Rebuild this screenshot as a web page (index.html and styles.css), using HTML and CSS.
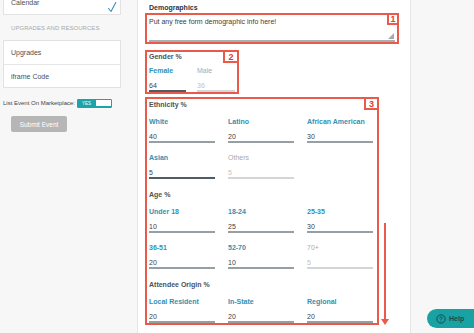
FILE: index.html
```html
<!DOCTYPE html>
<html>
<head>
<meta charset="utf-8">
<link rel="stylesheet" href="styles.css">
</head>
<body>
<div class="page">
  <aside class="sidebar">
    <div class="card first">
      <div class="card-row">Calendar
        <svg class="check" viewBox="0 0 10 12" width="10" height="12"><path d="M1.5 7.5 L4 10.5 L8.8 1.5" fill="none" stroke="#3a8fba" stroke-width="1.1" stroke-linecap="round" stroke-linejoin="round"/></svg>
      </div>
    </div>
    <div class="side-heading">UPGRADES AND RESOURCES</div>
    <div class="card">
      <div class="card-row">Upgrades</div>
      <div class="card-row divided">iframe Code</div>
    </div>
    <div class="market">
      <span>List Event On Marketplace:</span>
      <span class="toggle"><span class="toggle-on">YES</span><span class="toggle-off"></span></span>
    </div>
    <button class="submit">Submit Event</button>
  </aside>

  <main class="main">
    <div class="title">Demographics</div>

    <section class="box box1">
      <span class="badge b1">1</span>
      <div class="textarea">Put any free form demographic info here!<span class="grip"></span></div>
    </section>

    <section class="box box2">
      <span class="badge b2">2</span>
      <div class="heading">Gender %</div>
      <div class="grid grid2">
        <div class="field"><div class="label">Female</div><div class="value dark">64</div></div>
        <div class="field off"><div class="label">Male</div><div class="value">36</div></div>
      </div>
    </section>

    <section class="box box3">
      <span class="badge b3">3</span>
      <div class="heading">Ethnicity %</div>
      <div class="grid grid3">
        <div class="field"><div class="label">White</div><div class="value">40</div></div>
        <div class="field"><div class="label">Latino</div><div class="value">20</div></div>
        <div class="field"><div class="label">African American</div><div class="value">30</div></div>
        <div class="field"><div class="label">Asian</div><div class="value dark">5</div></div>
        <div class="field off"><div class="label">Others</div><div class="value">5</div></div>
      </div>

      <div class="heading section">Age %</div>
      <div class="grid grid3">
        <div class="field"><div class="label">Under 18</div><div class="value">10</div></div>
        <div class="field"><div class="label">18-24</div><div class="value">25</div></div>
        <div class="field"><div class="label">25-35</div><div class="value">30</div></div>
        <div class="field"><div class="label">36-51</div><div class="value">20</div></div>
        <div class="field"><div class="label">52-70</div><div class="value">10</div></div>
        <div class="field off"><div class="label">70+</div><div class="value">5</div></div>
      </div>

      <div class="heading section">Attendee Origin %</div>
      <div class="grid grid3">
        <div class="field"><div class="label">Local Resident</div><div class="value">20</div></div>
        <div class="field"><div class="label">In-State</div><div class="value">20</div></div>
        <div class="field"><div class="label">Regional</div><div class="value">20</div></div>
      </div>
    </section>

    <div class="arrow"></div>
  </main>

  <div class="rest">
    <button class="help">
      <svg class="help-icon" viewBox="0 0 12 12" width="10" height="10">
        <circle cx="6" cy="6" r="5" fill="none" stroke="#1d4b4d" stroke-width="1.2"/>
        <path d="M4.6 4.7 C4.6 3.9 5.2 3.5 6 3.5 C6.8 3.5 7.4 4 7.4 4.7 C7.4 5.5 6.3 5.6 6.1 6.5" fill="none" stroke="#1d4b4d" stroke-width="1.1" stroke-linecap="round"/>
        <circle cx="6.05" cy="8.3" r="0.65" fill="#1d4b4d"/>
      </svg>
      <span>Help</span>
    </button>
  </div>
</div>
</body>
</html>
```

FILE: styles.css
```css
* { box-sizing: border-box; }

html, body {
  margin: 0;
  padding: 0;
  width: 474px;
  height: 333px;
  overflow: hidden;
  background: #f7f7f7;
  font-family: "Liberation Sans", Arial, sans-serif;
  color: #3d4247;
}

.page {
  display: flex;
  height: 333px;
}

/* ---------- sidebar ---------- */
.sidebar {
  width: 137px;
  flex-shrink: 0;
  padding-left: 3px;
}

.card {
  width: 118px;
  background: #fff;
  border: 1px solid #e2e2e2;
}

.card.first { margin-top: -10px; }

.card-row {
  height: 23px;
  display: flex;
  align-items: center;
  padding-left: 7px;
  font-size: 7px;
  color: #4a4f54;
}

.card-row.divided { border-top: 1px solid #e6e6e6; }

.check {
  display: block;
  margin-left: auto;
  margin-right: 3px;
  position: relative;
  top: 4px;
}

.side-heading {
  margin: 9px 0 8px 8px;
  font-size: 6px;
  line-height: 8px;
  color: #a9a9a9;
  letter-spacing: 0.05px;
}

.market {
  margin-top: 10px;
  height: 10px;
  display: flex;
  align-items: center;
  font-size: 6px;
  color: #3f4449;
}

.toggle {
  margin-left: 2px;
  width: 35px;
  height: 9px;
  border: 1px solid #1da3a8;
  background: #1da3a8;
  display: flex;
  border-radius: 1px;
}

.toggle-on {
  width: 17px;
  color: #fff;
  font-size: 4.5px;
  line-height: 7px;
  text-align: center;
}

.toggle-off {
  flex: 1;
  background: #fff;
  margin: 0.5px 0.5px 0.5px 1px;
}

.submit {
  display: block;
  margin: 8px 0 0 8px;
  width: 56px;
  height: 16px;
  border: none;
  border-radius: 2px;
  background: #b6b6b6;
  color: #fff;
  font-family: "Liberation Sans", Arial, sans-serif;
  font-size: 6.5px;
  padding: 0;
}

/* ---------- main ---------- */
.main {
  position: relative;
  width: 274px;
  flex-shrink: 0;
  background: #fff;
  border-left: 1px solid #e6e6e6;
  border-right: 1px solid #e6e6e6;
  padding: 3px 0 0 7px;
}

.title {
  font-size: 7px;
  line-height: 10px;
  font-weight: 700;
  color: #2f353a;
  padding-left: 4px;
}

.box {
  position: relative;
  border: 2px solid #ea5a4a;
}

.box1 {
  width: 254px;
  height: 31px;
  padding: 0 2px;
}

.box2 {
  margin-top: 6px;
  width: 94px;
  height: 44px;
  padding: 0 2px;
}

.box3 {
  margin-top: 3px;
  width: 234px;
  height: 228px;
  padding: 1px 2px 0 2px;
}

.badge {
  position: absolute;
  top: -2px;
  right: -2px;
  border: 2px solid #ea5a4a;
  background: #fff;
  color: #e23a2c;
  font-weight: 700;
  font-size: 9px;
  display: flex;
  align-items: center;
  justify-content: center;
}

.b1 { width: 12px; height: 12px; }
.b2 { width: 16px; height: 13px; }
.b3 { width: 15px; height: 13px; }

.textarea {
  position: relative;
  margin-top: 3px;
  height: 24px;
  font-size: 7px;
  line-height: 8px;
  color: #3b4045;
  border-bottom: 2px solid #a7afb4;
}

.grip {
  position: absolute;
  right: 1px;
  bottom: 1px;
  width: 0;
  height: 0;
  border-left: 6px solid transparent;
  border-bottom: 6px solid #a9a9a9;
}

.heading {
  font-size: 7px;
  line-height: 10px;
  font-weight: 700;
  color: #4b5257;
}

.heading.section { margin-top: 11px; }

.grid {
  display: grid;
  row-gap: 10px;
}

.grid3 {
  margin-top: 7px;
  grid-template-columns: 66px 66px 66px;
  column-gap: 13px;
}

.grid2 {
  margin-top: 4px;
  grid-template-columns: 37px 38px;
  column-gap: 11px;
}

.label {
  font-size: 7px;
  line-height: 10px;
  font-weight: 700;
  color: #2f92b3;
  white-space: nowrap;
}

.value {
  margin-top: 6px;
  font-size: 7px;
  line-height: 8px;
  color: #3a3f44;
  border-bottom: 2px solid #959fa4;
}

.value.dark { border-bottom-color: #4f5c66; }

.field.off .label { color: #aaaaaa; font-weight: 400; }
.field.off .value { color: #c2c2c2; border-bottom-color: #d3d6d8; }

.arrow {
  position: absolute;
  left: 246px;
  top: 223px;
  width: 2px;
  height: 97px;
  background: #ea5a4a;
}

.arrow::after {
  content: "";
  position: absolute;
  left: -3px;
  bottom: -5px;
  border-left: 4px solid transparent;
  border-right: 4px solid transparent;
  border-top: 6px solid #ea5a4a;
}

/* ---------- right ---------- */
.rest {
  flex: 1;
  position: relative;
}

.help {
  position: absolute;
  left: 16px;
  top: 309px;
  width: 56px;
  height: 19px;
  border: none;
  border-radius: 10px;
  background: #19a2a3;
  display: flex;
  align-items: center;
  padding: 0 0 0 9px;
  gap: 3px;
  font-family: "Liberation Sans", Arial, sans-serif;
  font-weight: 700;
  font-size: 7px;
  color: #1d4b4d;
}

.help-icon { display: block; }
```
